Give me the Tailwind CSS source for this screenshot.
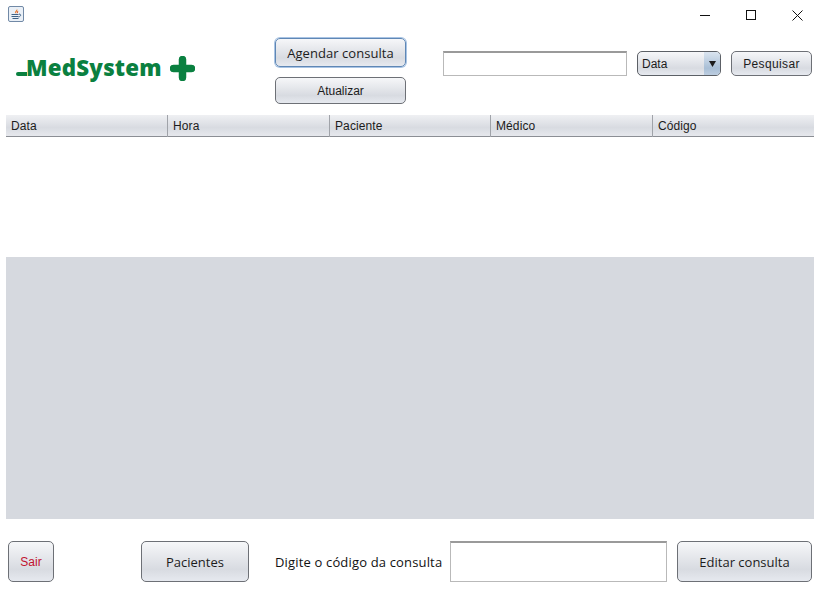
<!DOCTYPE html>
<html>
<head>
<meta charset="utf-8">
<script src="https://cdn.jsdelivr.net/npm/@tailwindcss/browser@4"></script>
</head>
<body class="bg-white">
<div class="w-[818px] h-[590px] flex flex-col bg-white overflow-hidden font-['Liberation_Sans',sans-serif] text-[#1c1c1c]">
  <!-- title bar -->
  <div class="h-[30px] shrink-0 flex items-start justify-between">
    <svg class="mt-[6px] ml-[8px]" width="16" height="16" viewBox="0 0 16 16">
      <rect x="0.5" y="0.5" width="15" height="15" rx="1.5" fill="#eaf0f7" stroke="#7189a6"/>
      <path d="M8.500 2c2 1.700-2.800 3.200-1.200 5.800 .2-1.700 3.500-2.800 1.200-5.800z" fill="#e8741c"/>
      <path d="M10 4.500c-.5 1-1.800 1.600-1.100 3.200 .7-.8 1.800-1.600 1.100-3.200z" fill="#d94f1c"/>
      <path d="M3.500 8.500h7M3.500 10.500h7M4.500 12.500h6" stroke="#3f6286" stroke-width="1"/>
      <path d="M11 8c2.300 0 2.300 2.300-.5 3" stroke="#3f6286" fill="none"/>
    </svg>
    <div class="flex mr-[-2px]">
      <div class="w-[46px] h-[30px] flex items-center justify-center"><svg width="10" height="10" viewBox="0 0 10 10"><path d="M0 5.500h10" stroke="#111" stroke-width="1"/></svg></div>
      <div class="w-[46px] h-[30px] flex items-center justify-center"><svg width="10" height="10" viewBox="0 0 10 10"><rect x=".5" y=".5" width="9" height="9" fill="none" stroke="#111"/></svg></div>
      <div class="w-[46px] h-[30px] flex items-center justify-center"><svg width="11" height="11" viewBox="0 0 11 11"><path d="M.5.500l10 10M10.500.500l-10 10" stroke="#111" stroke-width="1"/></svg></div>
    </div>
  </div>

  <!-- toolbar -->
  <div class="h-[85px] shrink-0 flex items-start">
    <div class="w-[275px] pl-[16px] pt-[24px] flex items-center h-[52px]">
      <span class="w-[11px] h-[4px] bg-[#0a8040] rounded-l-[2px] self-end mb-[6px] mr-[-1px]"></span>
      <span class="font-['Open_Sans',sans-serif] font-extrabold text-[22.300px] tracking-[0.2px] leading-none text-[#0a8040]">MedSystem</span>
      <svg class="ml-[8px] mt-[1px]" width="25" height="25" viewBox="0 0 25 25"><path d="M12.500 3.500v18M3.500 12.500h18" stroke="#0a8040" stroke-width="7.500" stroke-linecap="round"/></svg>
    </div>
    <div class="w-[131px] flex flex-col gap-[10px] pt-[8px]">
      <button class="h-[29px] pt-[2px] rounded-[5px] border border-[#5f87b5] shadow-[0_0_0_1px_#a9c4e4] bg-linear-to-b from-[#f6f7f9] via-[#d8dbe1] via-70% to-[#e6e9ef] font-['Open_Sans',sans-serif] text-[13px] tracking-[0.05px] text-[#1c1c1c]">Agendar consulta</button>
      <button class="h-[27px] rounded-[5px] border border-[#6d7076] bg-linear-to-b from-[#f6f7f9] via-[#d8dbe1] via-70% to-[#e6e9ef] text-[12px]">Atualizar</button>
    </div>
    <div class="ml-[37px] mt-[21px] w-[184px] h-[25px] bg-white border border-[#b9b9b9] border-t-2 border-t-[#9a9a9a]"></div>
    <div class="ml-[10px] mt-[21px] w-[84px] h-[25px] rounded-[5px] border border-[#5c6066] flex overflow-hidden bg-linear-to-b from-[#f6f7f9] via-[#d8dbe1] via-70% to-[#e6e9ef]">
      <span class="flex-1 pl-[4px] text-[12px] leading-[24px]">Data</span>
      <span class="w-[16px] flex items-center justify-center bg-linear-to-b from-[#dbe5f0] via-[#a9bfd6] via-70% to-[#bccde0]">
        <svg width="7" height="6" viewBox="0 0 7 6"><path d="M0 0h7L3.500 6z" fill="#1c1c1c"/></svg>
      </span>
    </div>
    <button class="ml-[10px] mt-[21px] w-[81px] h-[25px] rounded-[5px] border border-[#6d7076] bg-linear-to-b from-[#f6f7f9] via-[#d8dbe1] via-70% to-[#e6e9ef] text-[12px] tracking-[0.35px]">Pesquisar</button>
  </div>

  <!-- table -->
  <div class="ml-[6px] mr-[4px] flex-1 flex flex-col">
    <div class="h-[22px] shrink-0 grid grid-cols-[162px_162px_161px_162px_1fr] border-b border-[#8b8e94] bg-linear-to-b from-[#eff0f3] via-[#d8dbe1] via-60% to-[#e6e8ed] text-[12px] leading-[23px] tracking-[0.1px]">
      <div class="pl-[5px] border-r border-[#a0a3a9]">Data</div>
      <div class="pl-[5px] border-r border-[#a0a3a9]">Hora</div>
      <div class="pl-[5px] border-r border-[#a0a3a9]">Paciente</div>
      <div class="pl-[5px] border-r border-[#a0a3a9]">Médico</div>
      <div class="pl-[5px]">Código</div>
    </div>
    <div class="h-[120px] shrink-0 bg-white"></div>
    <div class="h-[262px] shrink-0 bg-[#d6d9df]"></div>
  </div>

  <!-- footer -->
  <div class="h-[71px] shrink-0 flex items-start pt-[22px] pl-[8px]">
    <button class="w-[46px] h-[41px] rounded-[5px] border border-[#6d7076] bg-linear-to-b from-[#f6f7f9] via-[#d8dbe1] via-70% to-[#e6e9ef] text-[12px] text-[#c1122f]">Sair</button>
    <button class="ml-[87px] w-[108px] h-[41px] pt-[2px] rounded-[5px] border border-[#6d7076] bg-linear-to-b from-[#f6f7f9] via-[#d8dbe1] via-70% to-[#e6e9ef] font-['Open_Sans',sans-serif] text-[13px]">Pacientes</button>
    <span class="ml-[26px] w-[175px] h-[41px] leading-[42px] font-['Open_Sans',sans-serif] text-[13px] tracking-[0.16px] text-[#111]">Digite o código da consulta</span>
    <div class="w-[217px] h-[41px] bg-white border border-[#b9b9b9] border-t-2 border-t-[#9a9a9a]"></div>
    <button class="ml-[10px] w-[135px] h-[41px] pt-[2px] rounded-[5px] border border-[#6d7076] bg-linear-to-b from-[#f6f7f9] via-[#d8dbe1] via-70% to-[#e6e9ef] font-['Open_Sans',sans-serif] text-[13px]">Editar consulta</button>
  </div>
</div>
</body>
</html>
